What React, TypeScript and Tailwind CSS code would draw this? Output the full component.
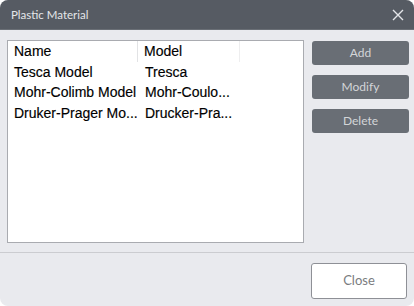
export default function App() {
  const rows = [
    ["Tesca Model", "Tresca"],
    ["Mohr-Colimb Model", "Mohr-Coulo..."],
    ["Druker-Prager Mo...", "Drucker-Pra..."],
  ];
  return (
    <div className="w-[414px] h-[306px] bg-white font-['Liberation_Sans',sans-serif]">
      <div className="w-full h-full rounded-[8px] overflow-hidden bg-[#e9eaee] flex flex-col">
        {/* title bar */}
        <div className="h-[30px] bg-[#565b63] border-b border-[#6a6f76] flex items-center justify-between pl-[11px] pr-[10px] shrink-0">
          <span className="text-[11.5px] text-[#e4e6e9] font-['Lato',sans-serif]">Plastic Material</span>
          <svg width="12" height="12" viewBox="0 0 12 12" className="text-[#e4e6e9]">
            <path d="M1 1 L11 11 M11 1 L1 11" stroke="currentColor" strokeWidth="1.4" />
          </svg>
        </div>

        <div className="flex gap-[8px] pl-[7px] pt-[10px]">
          <div className="w-[297px] h-[203px] bg-white border border-[#a9abb0]">
            <div className="flex h-[21px] items-center text-[14px] text-black [-webkit-text-stroke:0.15px_black]">
              <div className="w-[130px] h-full pl-[6px] flex items-center border-r border-[#e2e3e5]">Name</div>
              <div className="w-[102px] h-full pl-[6px] flex items-center border-r border-[#eeeeef]">Model</div>
            </div>
            {rows.map(([n, m]) => (
              <div key={n} className="flex h-[20.5px] items-center text-[14px] text-black [-webkit-text-stroke:0.15px_black]">
                <div className="w-[131px] pl-[6px] whitespace-nowrap overflow-hidden">{n}</div>
                <div className="w-[102px] pl-[6px] whitespace-nowrap overflow-hidden">{m}</div>
              </div>
            ))}
          </div>
          <div className="w-[97px] flex flex-col gap-[10px] pt-[1px]">
            {["Add", "Modify", "Delete"].map((b) => (
              <div
                key={b}
                className="h-[24px] rounded-[3px] bg-[#696e75] text-[#d3d5d8] text-[12px] flex items-center justify-center font-['Lato',sans-serif]"
              >
                {b}
              </div>
            ))}
          </div>
        </div>

        <div className="mt-[9px] border-t border-[#cbccd0]" />

        <div className="flex justify-end pr-[7px] pt-[10px]">
          <div className="w-[96px] h-[36px] bg-white border border-[#8e9096] rounded-[3px] flex items-center justify-center text-[13px] text-[#7a7c80] font-['Lato',sans-serif]">
            Close
          </div>
        </div>
      </div>
    </div>
  );
}
